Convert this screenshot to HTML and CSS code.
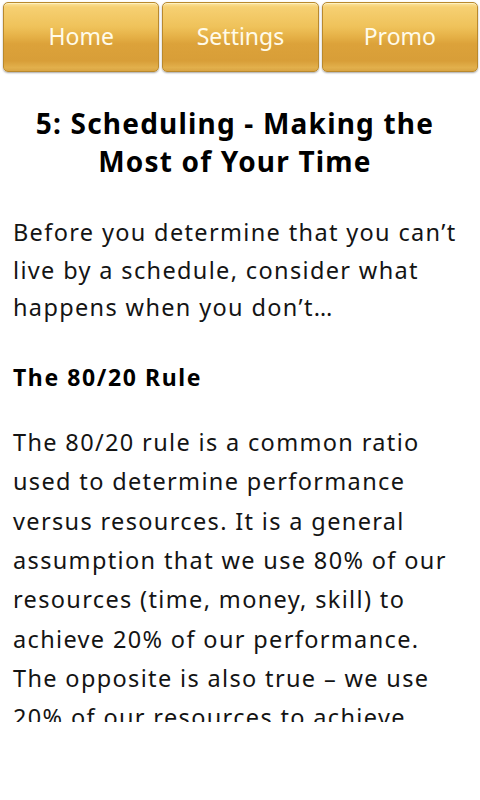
FILE: index.html
```html
<!DOCTYPE html>
<html>
<head>
<meta charset="utf-8">
<link rel="stylesheet" href="styles.css">
</head>
<body>
<nav class="tabs">
  <div class="tab">Home</div>
  <div class="tab">Settings</div>
  <div class="tab">Promo</div>
</nav>
<main class="content">
  <h1 class="title">5: Scheduling - Making the Most of Your Time</h1>
  <p class="intro">Before you determine that you can’t live by a schedule, consider what happens when you don’t…</p>
  <h2 class="subhead">The 80/20 Rule</h2>
  <p class="body">The 80/20 rule is a common ratio used to determine performance versus resources. It is a general assumption that we use 80% of our resources (time, money, skill) to achieve 20% of our performance. The opposite is also true – we use 20% of our resources to achieve 80% of our performance.</p>
</main>
</body>
</html>
```

FILE: styles.css
```css
html, body {
  margin: 0;
  padding: 0;
  background: #ffffff;
  width: 480px;
  height: 800px;
  overflow: hidden;
}
body {
  font-family: "Noto Sans", "Open Sans", sans-serif;
  color: #141414;
}
.tabs {
  display: flex;
  gap: 3px;
  padding: 2px 2px 0 3px;
  height: 72px;
  box-sizing: border-box;
}
.tab {
  flex: 1;
  height: 70px;
  box-sizing: border-box;
  border: 1px solid #b9892d;
  border-radius: 5px;
  background: linear-gradient(#fbe4a0 0%, #f6d072 6%, #efc25a 35%, #e5b046 50%, #dca23a 60%, #d89e38 85%, #e2b04c 95%, #d9a443 100%);
  box-shadow: 0 1px 2px rgba(0, 0, 0, 0.35), inset 0 1px 0 rgba(255, 245, 200, 0.8);
  color: #fffbea;
  font-size: 23px;
  display: flex;
  align-items: center;
  justify-content: center;
  padding-bottom: 2px;
}
.content {
  height: 650px;
  overflow: hidden;
  padding: 0 23px 0 13px;
}
.title {
  margin: 33px 0 0;
  font-size: 28px;
  font-weight: bold;
  letter-spacing: 1.2px;
  line-height: 37.5px;
  text-align: center;
  color: #000;
}
.intro {
  margin: 34px 0 0;
  font-size: 23.5px;
  letter-spacing: 1.35px;
  line-height: 37.7px;
}
.subhead {
  margin: 31px 0 0;
  font-size: 23px;
  font-weight: bold;
  letter-spacing: 1.6px;
  line-height: 38px;
  color: #000;
}
.body {
  margin: 27px 0 0;
  font-size: 23.5px;
  letter-spacing: 1.35px;
  line-height: 39.3px;
}
```
